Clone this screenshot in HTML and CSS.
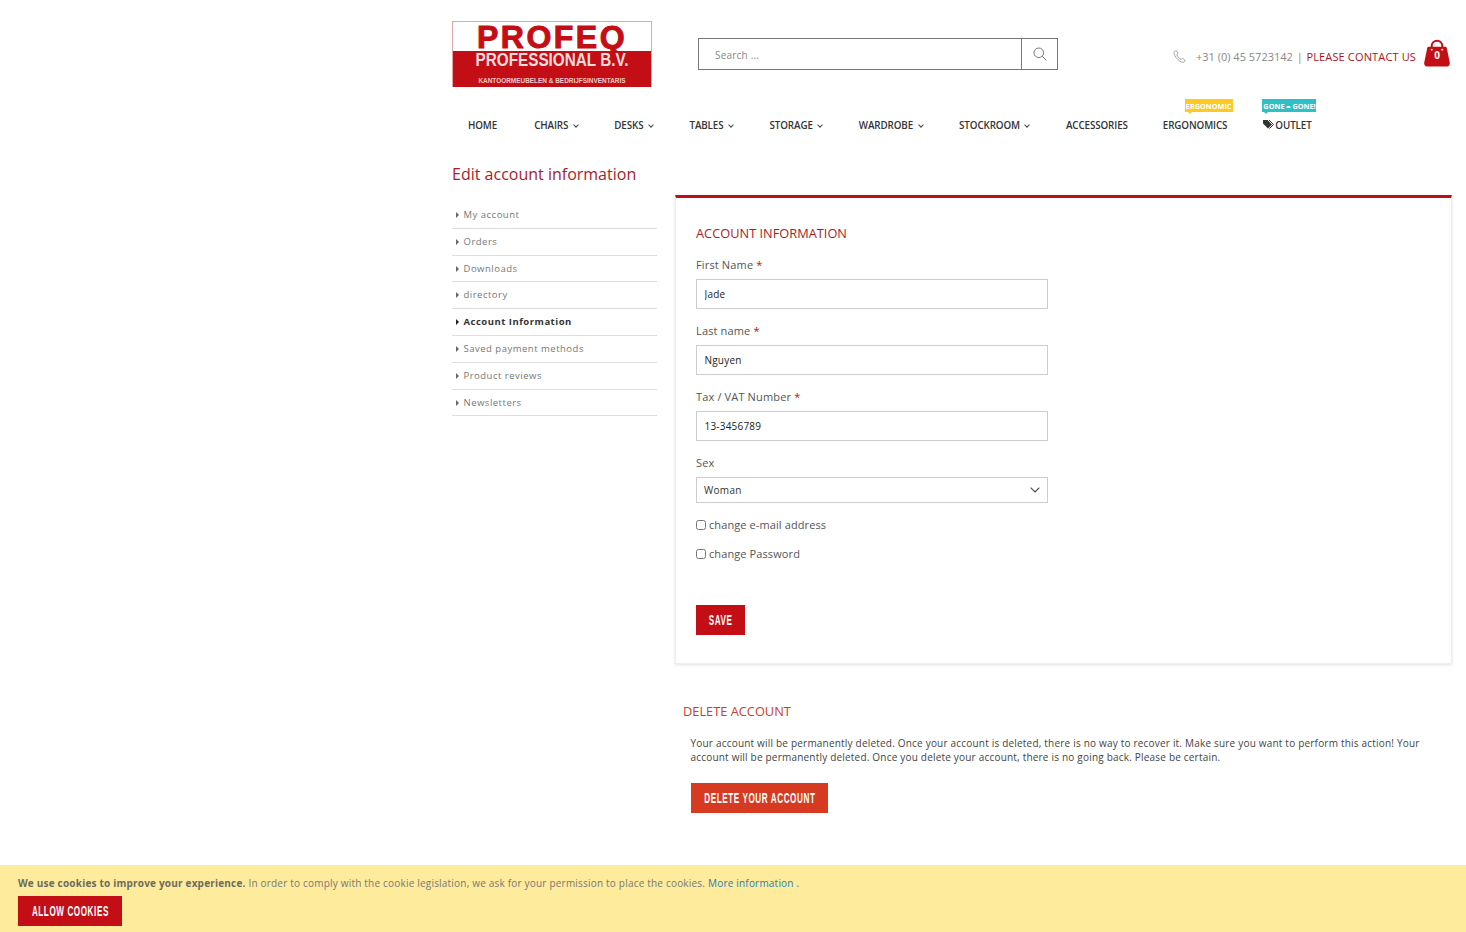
FILE: index.html
```html
<!DOCTYPE html>
<html lang="en">
<head>
  <meta charset="UTF-8">
  <meta name="viewport" content="width=device-width, initial-scale=1.0">
  <title>Edit account information</title>
  <link rel="stylesheet" href="styles.css">
</head>
<body>
  <div class="page">
    <header class="top">
      <a class="logo" href="#">
        <span class="logo-top">PROFEQ</span>
        <span class="logo-band">
          <span class="logo-name">PROFESSIONAL B.V.</span>
          <span class="logo-sub">KANTOORMEUBELEN &amp; BEDRIJFSINVENTARIS</span>
        </span>
      </a>
      <form class="search">
        <input type="text" placeholder="Search ...">
        <button type="button" aria-label="Search">
          <svg width="14" height="14" viewBox="0 0 14 14" fill="none" stroke="#777" stroke-width="1"><circle cx="5.8" cy="5.8" r="4.8"/><path d="M9.2 9.2L13.4 13.4"/></svg>
        </button>
      </form>
      <div class="contact">
        <svg class="phone" width="13" height="13" viewBox="0 0 13 13" fill="none" stroke="#999" stroke-width="0.9"><path d="M1 2.2L2.6 .8C3 .5 3.4 .6 3.6 1L4.7 3C4.9 3.400 4.800 3.700 4.500 4L3.800 4.600C4.300 6.500 6.300 8.700 8.200 9.500L8.900 8.700C9.200 8.400 9.600 8.300 10 8.600L11.800 10C12.200 10.300 12.200 10.700 11.900 11L10.700 12.200C9.800 12.700 7.500 12 4.900 9.600C2.200 7 .4 3.600 1 2.200Z"/></svg>
        <span class="phone-no">+31 (0) 45 5723142</span>
        <span class="sep">|</span>
        <a href="#">PLEASE CONTACT US</a>
      </div>
      <a class="cart" href="#">
        <svg width="26" height="28" viewBox="0 0 27 28"><path d="M8 9V7C8 3.500 10.500 1.200 13.500 1.200S19 3.500 19 7V9" fill="none" stroke="#c30e16" stroke-width="2"/><path d="M5 7.500H22C23 7.500 23.500 8 23.700 9L26.800 24C27.100 26.500 25.800 28 24 28H3C1.200 28 -.1 26.500 .2 24L3.300 9C3.500 8 4 7.500 5 7.500Z" fill="#c30e16"/><circle cx="8" cy="10.500" r="1" fill="#fff"/><circle cx="19" cy="10.500" r="1" fill="#fff"/></svg>
        <span class="cart-count">0</span>
      </a>
    </header>

    <nav class="menu">
      <a href="#">HOME</a>
      <a href="#" class="drop">CHAIRS</a>
      <a href="#" class="drop">DESKS</a>
      <a href="#" class="drop">TABLES</a>
      <a href="#" class="drop">STORAGE</a>
      <a href="#" class="drop">WARDROBE</a>
      <a href="#" class="drop">STOCKROOM</a>
      <a href="#">ACCESSORIES</a>
      <a href="#" class="has-badge">ERGONOMICS<span class="badge badge-yellow">ERGONOMIC</span></a>
      <a href="#" class="has-badge">
        <svg class="tag" width="11" height="9" viewBox="0 0 11 9"><path d="M0 0H4.500L9 4.500L5 8.500L0 3.500Z" fill="#333"/><path d="M6 0L10.500 4.500L6.500 8.500" fill="none" stroke="#333"/></svg>OUTLET<span class="badge badge-teal">GONE = GONE!</span>
      </a>
    </nav>

    <h1 class="page-title">Edit account information</h1>

    <div class="columns">
      <aside class="side">
        <ul>
          <li><a href="#">My account</a></li>
          <li><a href="#">Orders</a></li>
          <li><a href="#">Downloads</a></li>
          <li><a href="#">directory</a></li>
          <li class="active"><a href="#">Account Information</a></li>
          <li><a href="#">Saved payment methods</a></li>
          <li><a href="#">Product reviews</a></li>
          <li><a href="#">Newsletters</a></li>
        </ul>
      </aside>

      <main class="content">
        <section class="panel">
          <h2>ACCOUNT INFORMATION</h2>
          <div class="field">
            <label>First Name <em>*</em></label>
            <input type="text" value="Jade">
          </div>
          <div class="field">
            <label>Last name <em>*</em></label>
            <input type="text" value="Nguyen">
          </div>
          <div class="field">
            <label>Tax / VAT Number <em>*</em></label>
            <input type="text" value="13-3456789">
          </div>
          <div class="field">
            <label>Sex</label>
            <div class="select">
              <span>Woman</span>
              <svg width="10" height="6" viewBox="0 0 10 6" fill="none" stroke="#444" stroke-width="1.100"><path d="M.7 .7L5 5L9.300 .7"/></svg>
            </div>
          </div>
          <label class="check"><input type="checkbox"> change e-mail address</label>
          <label class="check"><input type="checkbox"> change Password</label>
          <button type="button" class="btn save"><span>SAVE</span></button>
        </section>

        <section class="delete">
          <h2>DELETE ACCOUNT</h2>
          <p>Your account will be permanently deleted. Once your account is deleted, there is no way to recover it. Make sure you want to perform this action! Your account will be permanently deleted. Once you delete your account, there is no going back. Please be certain.</p>
          <button type="button" class="btn btn-orange"><span>DELETE YOUR ACCOUNT</span></button>
        </section>
      </main>
    </div>
  </div>

  <div class="cookies">
    <p><strong>We use cookies to improve your experience.</strong> In order to comply with the cookie legislation, we ask for your permission to place the cookies. <a href="#">More information</a> <span class="dot">.</span></p>
    <button type="button" class="btn"><span>ALLOW COOKIES</span></button>
  </div>
</body>
</html>
```

FILE: styles.css
```css
* {
  box-sizing: border-box;
}
body {
  margin: 0;
  font-family: "Open Sans", sans-serif;
  font-size: 11px;
  color: #444;
  background: #fff;
}
a {
  text-decoration: none;
  color: inherit;
}
ul {
  list-style: none;
  margin: 0;
  padding: 0;
}
.page {
  width: 1000px;
  margin-left: 452px;
  height: 865px;
}

/* header */
.top {
  display: flex;
  align-items: flex-start;
  height: 99px;
  padding-top: 21px;
}
.logo {
  display: flex;
  flex-direction: column;
  width: 200px;
  height: 66px;
  border: 1px solid #e3a6a9;
  border-bottom: 0;
  flex-shrink: 0;
}
.logo-top {
  height: 29px;
  text-align: center;
  font-family: "Liberation Sans", sans-serif;
  font-weight: bold;
  font-size: 32px;
  line-height: 31px;
  letter-spacing: 2.500px;
  color: #c30e16;
  -webkit-text-stroke: 1px #c30e16;
}
.logo-band {
  flex: 1;
  display: flex;
  flex-direction: column;
  align-items: center;
  background: #c30e16;
  color: #fff;
  font-family: "Liberation Sans", sans-serif;
  font-weight: bold;
}
.logo-name {
  font-size: 18px;
  line-height: 18px;
  transform: scaleX(0.85);
  white-space: nowrap;
  color: #f6dcdc;
}
.logo-sub {
  font-size: 7px;
  line-height: 9px;
  margin-top: 7px;
  transform: scaleX(0.92);
  white-space: nowrap;
  color: #f3c9ca;
}
.search {
  display: flex;
  width: 360px;
  height: 32px;
  margin: 17px 0 0 46px;
  border: 1px solid #777;
}
.search input {
  flex: 1;
  border: 0;
  outline: 0;
  padding: 1px 16px 0;
  font-family: inherit;
  font-size: 10px;
  letter-spacing: 0.2px;
  background: none;
}
.search input::placeholder {
  color: #888;
  opacity: 1;
}
.search button {
  width: 36px;
  border: 0;
  border-left: 1px solid #777;
  background: none;
  padding: 0 0 0 1px;
  display: flex;
  align-items: center;
  justify-content: center;
}
.contact {
  display: flex;
  align-items: center;
  margin: 28px 0 0 114.500px;
  height: 14px;
  font-size: 11px;
  white-space: nowrap;
  color: #888;
}
.phone {
  margin-right: 10.500px;
  margin-top: 1px;
}
.sep {
  margin: 0 3.500px 0 4px;
}
.contact a {
  color: #a81522;
  letter-spacing: 0.15px;
}
.cart {
  position: relative;
  display: block;
  margin: 18px 0 0 8px;
  width: 26px;
  height: 28px;
}
.cart svg {
  display: block;
}
.cart-count {
  position: absolute;
  left: 0;
  right: 0;
  top: 9px;
  text-align: center;
  color: #fff;
  font-weight: bold;
  font-size: 10px;
  line-height: 14px;
}

/* menu */
.menu {
  display: flex;
  height: 64px;
  padding-left: 16px;
  gap: 37px;
  align-items: flex-start;
  padding-top: 20px;
}
.menu a {
  position: relative;
  font-size: 9.800px;
  font-weight: 600;
  line-height: 13px;
  color: #333;
  white-space: nowrap;
  letter-spacing: -0.1px;
}
.menu .drop {
  margin-right: -0.500px;
}
.menu .drop::after {
  content: "";
  display: inline-block;
  width: 3px;
  height: 3px;
  margin-left: 5.500px;
  border-right: 1px solid #444;
  border-bottom: 1px solid #444;
  transform: rotate(45deg);
  vertical-align: 2px;
}
.tag {
  vertical-align: 0;
  margin-right: 1px;
}
.menu .has-badge {
  margin-left: -2px;
}
.menu .has-badge:last-child {
  margin-left: -1px;
}
.badge {
  position: absolute;
  top: -20px;
  left: 22px;
  height: 13px;
  padding: 0 1px;
  font-size: 7.300px;
  font-weight: 700;
  line-height: 15px;
  letter-spacing: 0;
  color: #fff;
  overflow: hidden;
}
.badge-yellow {
  background: #fcca21;
  width: 48px;
}
.badge-teal {
  background: #2fbfc6;
  left: -1px;
  width: 54px;
}
.has-badge::after {
  content: "";
  position: absolute;
  top: -7px;
  left: 25px;
  border: 2px solid transparent;
  border-top-color: #fcca21;
}
.has-badge:last-child::after {
  left: 1px;
  border-top-color: #2fbfc6;
}

.page-title {
  margin: 0 0 10px;
  font-size: 16px;
  font-weight: 400;
  line-height: 22px;
  color: #ab1b25;
}

/* layout */
.columns {
  display: flex;
  gap: 18px;
}
.side {
  width: 205px;
  flex-shrink: 0;
  padding-top: 7px;
}
.side li {
  height: 26.800px;
  border-bottom: 1px solid #ddd;
  font-size: 9.500px;
  letter-spacing: 0.5px;
  line-height: 26px;
  color: #777;
}
.side a {
  display: block;
  padding-left: 11.500px;
  position: relative;
}
.side a::before {
  content: "";
  position: absolute;
  left: 4px;
  top: 10px;
  border: 3px solid transparent;
  border-left: 3px solid #666;
  border-right: 0;
}
.side .active {
  color: #333;
  font-weight: 700;
}
.side .active a::before {
  border-left-color: #222;
}
.content {
  flex: 1;
}

/* form panel */
.panel {
  height: 469px;
  border: 1px solid #eee;
  border-top: 3px solid #bb1019;
  box-shadow: 0 1px 3px rgba(0, 0, 0, 0.12);
  padding: 27px 20px 0;
}
.panel h2 {
  margin: 0 0 15px;
  font-size: 12.800px;
  font-weight: 400;
  line-height: 17px;
  color: #ab1b25;
}
.field {
  width: 352px;
  margin-bottom: 14px;
}
.field label {
  display: block;
  font-size: 11px;
  letter-spacing: 0.15px;
  line-height: 16px;
  margin-bottom: 6px;
  color: #555;
}
.field em {
  color: #c30e16;
  font-style: normal;
}
.field input {
  display: block;
  width: 100%;
  height: 30px;
  padding: 0 7.500px;
  border: 1px solid #ccc;
  font-family: inherit;
  font-size: 10px;
  letter-spacing: 0.2px;
  color: #222;
  outline: 0;
}
.select {
  display: flex;
  align-items: center;
  justify-content: space-between;
  height: 26px;
  padding: 0 7px;
  border: 1px solid #ccc;
  font-size: 10px;
  letter-spacing: 0.3px;
  color: #333;
}
.check {
  display: flex;
  align-items: center;
  height: 16px;
  margin-bottom: 13px;
  margin-top: -1px;
  font-size: 11px;
  letter-spacing: 0.1px;
  color: #555;
}
.check + .check {
  margin-top: 0;
}
.check input {
  width: 10px;
  height: 10px;
  margin: 1px 3px 0 0;
}
.btn {
  display: flex;
  align-items: center;
  justify-content: center;
  height: 30px;
  padding: 0;
  border: 0;
  background: #c30e16;
  color: #fff;
  font-family: "Liberation Sans", sans-serif;
  font-size: 14px;
  font-weight: 700;
  letter-spacing: 1px;
}
.btn span {
  display: inline-block;
  white-space: nowrap;
  transform: scaleX(0.58);
}
.save {
  margin-top: 44px;
  width: 49px;
}
.btn-orange {
  background: #d63b22;
}

/* delete */
.delete {
  padding: 39px 8px 0;
}
.delete h2 {
  margin: 0 0 16px;
  font-size: 12.800px;
  font-weight: 400;
  line-height: 17px;
  color: #c8402b;
}
.delete p {
  margin: 0 0 19px 7.500px;
  font-size: 10px;
  letter-spacing: 0.2px;
  line-height: 14px;
  color: #444;
}
.delete .btn {
  margin-left: 8px;
  width: 137px;
}

/* cookies */
.cookies {
  position: fixed;
  left: 0;
  right: 0;
  bottom: 0;
  height: 67px;
  padding: 11px 18px 0;
  background: #feeb9b;
}
.cookies p {
  margin: 0 0 6px;
  font-size: 10px;
  letter-spacing: 0.2px;
  line-height: 14px;
  color: #777;
}
.cookies strong {
  color: #6b6b60;
}
.cookies a {
  color: #2b7cb8;
}
.cookies .dot {
  color: #2b7cb8;
}
.cookies .btn {
  width: 104px;
}
```
